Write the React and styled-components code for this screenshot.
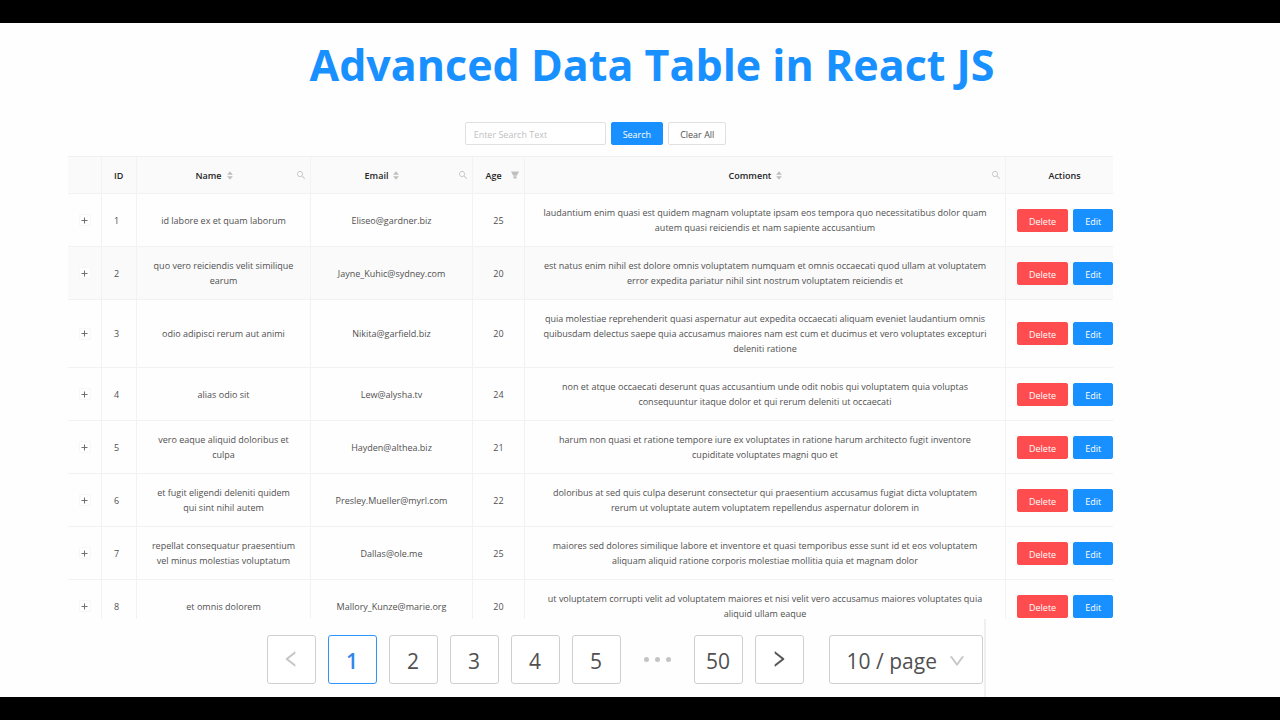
import React, {useState} from 'react';
import styled, {createGlobalStyle, css} from 'styled-components';
import {
	AiFillCaretDown,
	AiFillCaretUp,
	AiFillFilter,
	AiOutlineDown,
	AiOutlineLeft,
	AiOutlineRight,
	AiOutlineSearch
} from 'react-icons/ai';

const GlobalStyle = createGlobalStyle`
  * {
    box-sizing: border-box;
  }

  body {
    margin: 0;
    background: #000;
    color: #505050;
    font-family: "Open Sans", "Noto Sans", sans-serif;
    font-size: 9px;
    line-height: 15px;
  }

  button, input, select {
    font-family: inherit;
  }
`

const Page = styled.div`
  display: flex;
  flex-direction: column;
  height: 100vh;
  padding: 23px 0;
`

const Content = styled.main`
  flex: 1;
  min-height: 0;
  display: flex;
  flex-direction: column;
  background: #fefefe;
`

const Title = styled.h1`
  margin: 0;
  padding: 12px 0 0 24px;
  color: #1890ff;
  font-size: 43px;
  line-height: 60px;
  font-weight: 700;
  text-align: center;
`

const SearchForm = styled.form`
  display: flex;
  justify-content: center;
  gap: 5px;
  padding: 27px 89px 11px 0;
`

const SearchInput = styled.input`
  width: 141px;
  height: 23px;
  padding: 2px 8px 0;
  border: 1px solid #e0e0e0;
  border-radius: 2px;
  background: #fff;
  color: #505050;
  font-size: 9px;

  &::placeholder {
    color: #bfbfbf;
  }
`

const colors = {
	primary: '#1890ff',
	danger: '#ff4d4f'
}

const Button = styled.button`
  height: 23px;
  padding: 2px 11px 0;
  border: 1px solid ${({$kind}) => colors[$kind] || '#e0e0e0'};
  border-radius: 2px;
  background: ${({$kind}) => colors[$kind] || '#fff'};
  color: ${({$kind}) => $kind ? '#fff' : '#505050'};
  font-size: 9px;
  line-height: 19px;
  cursor: pointer;
`

const TableWrap = styled.div`
  flex: 1;
  min-height: 0;
  overflow: hidden;
  padding: 0 167px 0 68px;
`

const Table = styled.table`
  width: 100%;
  table-layout: fixed;
  border-collapse: separate;
  border-spacing: 0;
  border-top: 1px solid #f0f0f0;
`

const Col = styled.col`
  width: ${({$width}) => $width ? $width + 'px' : 'auto'};
`

const cell = css`
  border-bottom: 1px solid #f2f2f2;
  border-right: 1px solid #f2f2f2;
  text-align: ${({$align}) => $align || 'center'};

  &:last-child {
    border-right: 0;
  }
`

const Th = styled.th`
  ${cell};
  height: 37px;
  padding: 0 0 0 ${({$side}) => $side || 0}px;
  background: #fafafa;
  color: #262626;
  font-weight: 600;
`

const Td = styled.td`
  ${cell};
  padding: 11px ${({$side}) => $side || 0}px;
`

const Row = styled.tr`
  background: ${({$active}) => $active ? '#fafafa' : 'transparent'};
`

const ThInner = styled.div`
  display: flex;
  align-items: center;
  padding: 0 4px 0 ${({$left}) => $left || 0}px;
`

const ThTitle = styled.span`
  flex: 1;
  display: flex;
  align-items: center;
  justify-content: center;
  gap: 4px;
`

const Sorter = styled.span`
  display: flex;
  flex-direction: column;
  color: #bfbfbf;
  font-size: 8px;

  svg + svg {
    margin-top: -3px;
  }
`

const HeadButton = styled.button`
  display: flex;
  padding: 0 0 0 4px;
  border: 0;
  background: none;
  color: #bfbfbf;
  font-size: 10px;
  cursor: pointer;
`

const ExpandButton = styled.button`
  display: flex;
  align-items: center;
  justify-content: center;
  width: 12px;
  height: 12px;
  margin: 0 auto;
  padding: 0;
  border: 1px solid #f7f7f7;
  border-radius: 2px;
  background: #fff;
  color: #707070;
`

const Actions = styled.div`
  display: flex;
  gap: 5px;
  padding-left: 11px;
`

const Pagination = styled.nav`
  display: flex;
  align-self: flex-start;
  gap: 12px;
  width: 77%;
  height: 78px;
  padding: 16px 1px 0 0;
  justify-content: flex-end;
  border-right: 2px solid #f0f0f0;
`

const PageButton = styled.button`
  display: flex;
  align-items: center;
  justify-content: center;
  width: 49px;
  height: 49px;
  padding: 2px 0 0;
  border: 1px solid ${({$active}) => $active ? '#2b95fb' : '#cfcfcf'};
  border-radius: 3px;
  background: #fff;
  color: ${({$active}) => $active ? '#2f87ec' : '#505050'};
  font-size: 21px;
  font-weight: ${({$active}) => $active ? 600 : 400};

  &:disabled {
    color: #c4c4c4;
  }

  svg {
    margin-bottom: 3px;
    stroke: currentColor;
    stroke-width: 24px;
    font-size: 20px;
  }
`

const Ellipsis = styled.span`
  display: flex;
  align-items: center;
  justify-content: center;
  gap: 6px;
  width: 49px;
  height: 49px;
`

const Dot = styled.i`
  width: 5px;
  height: 5px;
  border-radius: 50%;
  background: #c4c4c4;
`

const SizeBox = styled.label`
  display: grid;
  align-items: center;
  width: 154px;
  height: 49px;
  margin-left: 13px;
  color: #c4c4c4;
  font-size: 18px;

  > * {
    grid-area: 1 / 1;
  }

  svg {
    justify-self: end;
    margin: 2px 17px 0 0;
    stroke: currentColor;
    stroke-width: 24px;
    pointer-events: none;
  }
`

const SizeSelect = styled.select`
  appearance: none;
  width: 100%;
  height: 100%;
  padding: 2px 17px 0;
  border: 1px solid #cfcfcf;
  border-radius: 3px;
  background: #fff;
  color: #505050;
  font-size: 21px;
`

const rows = [
	{id: 1, name: 'id labore ex et quam laborum', email: 'Eliseo@gardner.biz', age: 25, comment: 'laudantium enim quasi est quidem magnam voluptate ipsam eos tempora quo necessitatibus dolor quam autem quasi reiciendis et nam sapiente accusantium'},
	{id: 2, name: 'quo vero reiciendis velit similique earum', email: 'Jayne_Kuhic@sydney.com', age: 20, comment: 'est natus enim nihil est dolore omnis voluptatem numquam et omnis occaecati quod ullam at voluptatem error expedita pariatur nihil sint nostrum voluptatem reiciendis et'},
	{id: 3, name: 'odio adipisci rerum aut animi', email: 'Nikita@garfield.biz', age: 20, comment: 'quia molestiae reprehenderit quasi aspernatur aut expedita occaecati aliquam eveniet laudantium omnis quibusdam delectus saepe quia accusamus maiores nam est cum et ducimus et vero voluptates excepturi deleniti ratione'},
	{id: 4, name: 'alias odio sit', email: 'Lew@alysha.tv', age: 24, comment: 'non et atque occaecati deserunt quas accusantium unde odit nobis qui voluptatem quia voluptas consequuntur itaque dolor et qui rerum deleniti ut occaecati'},
	{id: 5, name: 'vero eaque aliquid doloribus et culpa', email: 'Hayden@althea.biz', age: 21, comment: 'harum non quasi et ratione tempore iure ex voluptates in ratione harum architecto fugit inventore cupiditate voluptates magni quo et'},
	{id: 6, name: 'et fugit eligendi deleniti quidem qui sint nihil autem', email: 'Presley.Mueller@myrl.com', age: 22, comment: 'doloribus at sed quis culpa deserunt consectetur qui praesentium accusamus fugiat dicta voluptatem rerum ut voluptate autem voluptatem repellendus aspernatur dolorem in'},
	{id: 7, name: 'repellat consequatur praesentium vel minus molestias voluptatum', email: 'Dallas@ole.me', age: 25, comment: 'maiores sed dolores similique labore et inventore et quasi temporibus esse sunt id et eos voluptatem aliquam aliquid ratione corporis molestiae mollitia quia et magnam dolor'},
	{id: 8, name: 'et omnis dolorem', email: 'Mallory_Kunze@marie.org', age: 20, comment: 'ut voluptatem corrupti velit ad voluptatem maiores et nisi velit vero accusamus maiores voluptates quia aliquid ullam eaque'}
]

const SearchableTitle = ({title}) => (
	<ThInner>
		<ThTitle>
			{title}
			<Sorter><AiFillCaretUp/><AiFillCaretDown/></Sorter>
		</ThTitle>
		<HeadButton aria-label={`Search ${title}`}><AiOutlineSearch/></HeadButton>
	</ThInner>
)

const PlusIcon = () => (
	<svg width="7" height="7" viewBox="0 0 7 7" stroke="currentColor">
		<path d="M3.5 0.5v6M0.5 3.5h6"/>
	</svg>
)

const App = () => {
	const [text, setText] = useState('')
	const [page, setPage] = useState(1)

	return (
		<Page>
			<GlobalStyle/>
			<Content>
				<Title>Advanced Data Table in React JS</Title>
				<SearchForm onSubmit={e => e.preventDefault()}>
					<SearchInput
						aria-label="Search text"
						placeholder="Enter Search Text"
						value={text}
						onChange={e => setText(e.target.value)}
					/>
					<Button $kind="primary" type="submit">Search</Button>
					<Button type="button" onClick={() => setText('')}>Clear All</Button>
				</SearchForm>
				<TableWrap>
					<Table>
						<colgroup>
							<Col $width={34}/>
							<Col $width={35}/>
							<Col $width={174}/>
							<Col $width={162}/>
							<Col $width={52}/>
							<Col/>
							<Col $width={107}/>
						</colgroup>
						<thead>
							<tr>
								<Th/>
								<Th $align="left" $side={12}>ID</Th>
								<Th><SearchableTitle title="Name"/></Th>
								<Th><SearchableTitle title="Email"/></Th>
								<Th>
									<ThInner $left={8}>
										<ThTitle>Age</ThTitle>
										<HeadButton aria-label="Filter Age"><AiFillFilter/></HeadButton>
									</ThInner>
								</Th>
								<Th><SearchableTitle title="Comment"/></Th>
								<Th><ThInner $left={14}><ThTitle>Actions</ThTitle></ThInner></Th>
							</tr>
						</thead>
						<tbody>
							{rows.map(row => (
								<Row key={row.id} $active={row.id === 2}>
									<Td><ExpandButton aria-label="Expand row"><PlusIcon/></ExpandButton></Td>
									<Td $align="left" $side={12}>{row.id}</Td>
									<Td $side={14}>{row.name}</Td>
									<Td>{row.email}</Td>
									<Td>{row.age}</Td>
									<Td $side={14}>{row.comment}</Td>
									<Td>
										<Actions>
											<Button $kind="danger">Delete</Button>
											<Button $kind="primary">Edit</Button>
										</Actions>
									</Td>
								</Row>
							))}
						</tbody>
					</Table>
				</TableWrap>
				<Pagination aria-label="Pagination">
					<PageButton disabled={page === 1} aria-label="Previous page" onClick={() => setPage(page - 1)}>
						<AiOutlineLeft/>
					</PageButton>
					{[1, 2, 3, 4, 5].map(n => (
						<PageButton key={n} $active={n === page} onClick={() => setPage(n)}>{n}</PageButton>
					))}
					<Ellipsis><Dot/><Dot/><Dot/></Ellipsis>
					<PageButton $active={page === 50} onClick={() => setPage(50)}>50</PageButton>
					<PageButton disabled={page === 50} aria-label="Next page" onClick={() => setPage(page + 1)}>
						<AiOutlineRight/>
					</PageButton>
					<SizeBox>
						<SizeSelect aria-label="Page size" defaultValue="10">
							<option value="10">10 / page</option>
							<option value="20">20 / page</option>
							<option value="50">50 / page</option>
						</SizeSelect>
						<AiOutlineDown/>
					</SizeBox>
				</Pagination>
			</Content>
		</Page>
	);
};

export default App;
